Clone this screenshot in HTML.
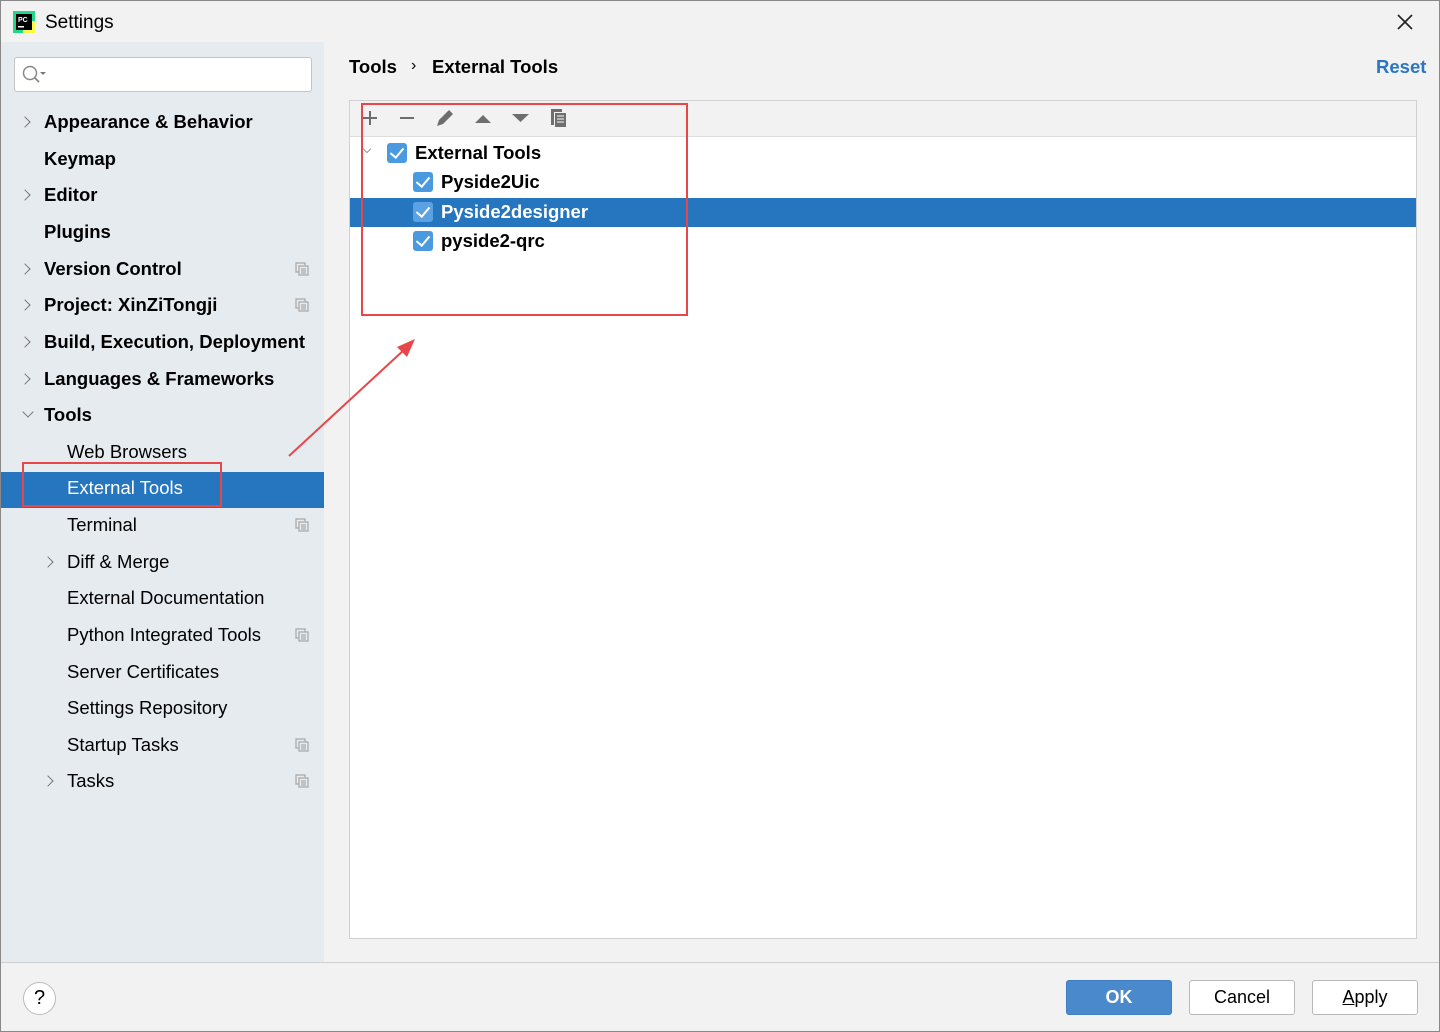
<!DOCTYPE html>
<html><head><meta charset="utf-8"><style>
*{margin:0;padding:0;box-sizing:border-box}
body{width:1440px;height:1032px;position:relative;background:#f2f2f2;font-family:"Liberation Sans",sans-serif;color:#000;overflow:hidden}
.a{position:absolute}
.it{position:absolute;height:26px;line-height:26px;font-size:18.5px;white-space:nowrap}
.b{font-weight:bold}
.arr{position:absolute;width:8px;height:8px;border-right:1.5px solid #777;border-top:1.5px solid #777;transform:rotate(45deg)}
.cp{position:absolute;width:14px;height:14px}
.cb{position:absolute;width:20px;height:20px;background:#4a9ae0;border-radius:3px}
.cb:after{content:"";position:absolute;left:6px;top:2px;width:6px;height:11px;border-right:2.5px solid #fff;border-bottom:2.5px solid #fff;transform:rotate(40deg)}
.btn{position:absolute;top:980px;height:35px;border:1px solid #b8b8b8;border-radius:3px;background:#fff;font-size:18px;text-align:center;line-height:33px}
</style></head><body>
<div class="a" style="left:0;top:0;width:1440px;height:1032px;border:1px solid #888;z-index:5"></div>
<svg class="a" style="left:13px;top:11px" width="22" height="22"><rect width="22" height="22" fill="#21d789"/><rect x="10" y="10" width="12" height="12" fill="#fcf84a"/><rect x="3" y="3" width="16" height="16" fill="#000"/><text x="5" y="11" font-size="7" font-weight="bold" fill="#fff" font-family="Liberation Sans">PC</text><rect x="5" y="15" width="6" height="1.5" fill="#fff"/></svg>
<div class="it" style="left:45px;top:10px;font-size:19px">Settings</div>
<svg class="a" style="left:1396px;top:13px" width="18" height="18"><path d="M2 2L16 16M16 2L2 16" stroke="#222" stroke-width="1.6"/></svg>
<div class="a" style="left:0;top:42px;width:324px;height:920px;background:#e6ebf0"></div>
<div class="a" style="left:14px;top:57px;width:298px;height:35px;background:#fff;border:1px solid #c4c4c4;border-radius:3px"></div>
<svg class="a" style="left:21px;top:64px" width="26" height="22"><circle cx="9" cy="9" r="6.5" fill="none" stroke="#888" stroke-width="1.5"/><path d="M14 14L18 18" stroke="#888" stroke-width="1.8"/><path d="M19 8h6l-3 3z" fill="#777"/></svg>
<div class="a" style="left:0;top:472px;width:324px;height:36px;background:#2675bf"></div>
<div class="a" style="left:22px;top:462px;width:200px;height:45px;border:2px solid #e8474a"></div>

<div class="arr" style="left:21px;top:118px"></div><div class="it b" style="left:44px;top:109px">Appearance &amp; Behavior</div>
<div class="it b" style="left:44px;top:146px">Keymap</div>
<div class="arr" style="left:21px;top:191px"></div><div class="it b" style="left:44px;top:182px">Editor</div>
<div class="it b" style="left:44px;top:219px">Plugins</div>
<div class="arr" style="left:21px;top:265px"></div><div class="it b" style="left:44px;top:256px">Version Control</div>
<div class="arr" style="left:21px;top:301px"></div><div class="it b" style="left:44px;top:292px">Project: XinZiTongji</div>
<div class="arr" style="left:21px;top:338px"></div><div class="it b" style="left:44px;top:329px">Build, Execution, Deployment</div>
<div class="arr" style="left:21px;top:375px"></div><div class="it b" style="left:44px;top:366px">Languages &amp; Frameworks</div>
<div class="arr" style="left:24px;top:408px;transform:rotate(135deg)"></div><div class="it b" style="left:44px;top:402px">Tools</div>
<div class="it" style="left:67px;top:439px">Web Browsers</div>
<div class="it" style="left:67px;top:475px;color:#fff">External Tools</div>
<div class="it" style="left:67px;top:512px">Terminal</div>
<div class="arr" style="left:44px;top:558px"></div><div class="it" style="left:67px;top:549px">Diff &amp; Merge</div>
<div class="it" style="left:67px;top:585px">External Documentation</div>
<div class="it" style="left:67px;top:622px">Python Integrated Tools</div>
<div class="it" style="left:67px;top:659px">Server Certificates</div>
<div class="it" style="left:67px;top:695px">Settings Repository</div>
<div class="it" style="left:67px;top:732px">Startup Tasks</div>
<div class="arr" style="left:44px;top:777px"></div><div class="it" style="left:67px;top:768px">Tasks</div>
<svg width="0" height="0"><defs><g id="cpi" fill="none" stroke="#aaa" stroke-width="1.3"><rect x="1" y="1" width="9" height="9"/><rect x="4" y="4" width="9" height="9" fill="#e6ebf0"/><path d="M6 7h5M6 9h5M6 11h5"/></g></defs></svg>
<svg class="cp" style="left:295px;top:262px"><use href="#cpi"/></svg>
<svg class="cp" style="left:295px;top:298px"><use href="#cpi"/></svg>
<svg class="cp" style="left:295px;top:518px"><use href="#cpi"/></svg>
<svg class="cp" style="left:295px;top:628px"><use href="#cpi"/></svg>
<svg class="cp" style="left:295px;top:738px"><use href="#cpi"/></svg>
<svg class="cp" style="left:295px;top:774px"><use href="#cpi"/></svg>
<div class="it b" style="left:349px;top:54px">Tools</div>
<div class="it" style="left:411px;top:53px;font-size:16px">›</div>
<div class="it b" style="left:432px;top:54px">External Tools</div>
<div class="it b" style="left:1376px;top:54px;color:#2a76c2">Reset</div>
<div class="a" style="left:349px;top:100px;width:1068px;height:839px;background:#fff;border:1px solid #d0d0d0"></div>
<div class="a" style="left:350px;top:101px;width:1066px;height:36px;background:#f2f2f2;border-bottom:1px solid #ddd"></div>
<svg class="a" style="left:360px;top:106px" width="220" height="26" fill="#6e6e6e">
<path d="M3 12h14M10 5v14" stroke="#6e6e6e" stroke-width="2"/>
<path d="M40 12h14" stroke="#6e6e6e" stroke-width="2"/>
<path d="M77 20l2-6 10-10 4 4-10 10z"/>
<path d="M115 17l8-8 8 8z"/>
<path d="M152 8h17l-8.5 8z"/>
<path d="M191 3h11v3h-8v13h-3z M195 7h11v14h-11z"/><path d="M197 10h7M197 13h7M197 16h7" stroke="#fff" stroke-width="1"/>
</svg>
<div class="a" style="left:350px;top:198px;width:1066px;height:29px;background:#2675bf"></div>
<div class="arr" style="left:364px;top:146px;transform:rotate(135deg);width:6px;height:6px;border-color:#999"></div>
<div class="cb" style="left:387px;top:143px"></div><div class="it b" style="left:415px;top:140px">External Tools</div>
<div class="cb" style="left:413px;top:172px"></div><div class="it b" style="left:441px;top:169px">Pyside2Uic</div>
<div class="cb" style="left:413px;top:202px;background:#5aa2e4"></div><div class="it b" style="left:441px;top:199px;color:#fff">Pyside2designer</div>
<div class="cb" style="left:413px;top:231px"></div><div class="it b" style="left:441px;top:228px">pyside2-qrc</div>
<div class="a" style="left:361px;top:103px;width:327px;height:213px;border:2px solid #e8474a"></div>
<svg class="a" style="left:285px;top:335px" width="135" height="125"><path d="M4 121L120 14" stroke="#e8474a" stroke-width="2"/><path d="M130 4L112 12l10 10z" fill="#e8474a"/></svg>
<div class="a" style="left:0;top:962px;width:1440px;height:1px;background:#d0d0d0"></div>
<div class="a" style="left:23px;top:982px;width:33px;height:33px;border:1px solid #bbb;border-radius:50%;background:#fff;text-align:center;line-height:31px;font-size:20px">?</div>
<div class="btn" style="left:1066px;width:106px;background:#4a89cc;border-color:#3f7ec2;color:#fff;font-weight:bold">OK</div>
<div class="btn" style="left:1189px;width:106px">Cancel</div>
<div class="btn" style="left:1312px;width:106px"><u>A</u>pply</div>
</body></html>
